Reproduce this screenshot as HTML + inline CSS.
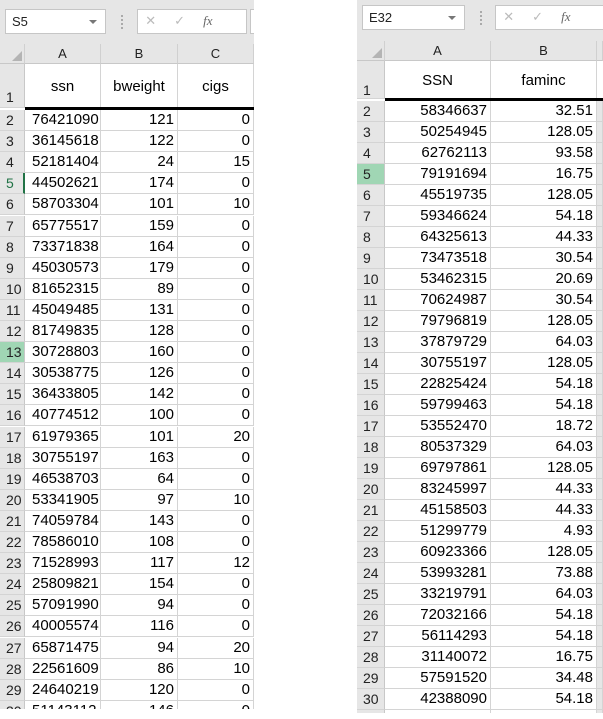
<!DOCTYPE html>
<html><head><meta charset="utf-8"><style>
*{margin:0;padding:0;box-sizing:border-box}
body{width:603px;height:719px;background:#fff;position:relative;overflow:hidden;font-family:"Liberation Sans",Calibri,sans-serif;font-size:15px;color:#000}
.p{position:absolute;overflow:hidden;background:#fff}
.tb{position:absolute;left:0;top:0;right:0;background:#e6e6e6}
.nb{position:absolute;background:#fff;border:1px solid #c6c6c6;font-size:13px;padding:4px 0 0 6px;color:#222}
.nb:after{content:"";position:absolute;right:8px;top:10px;border:4px solid transparent;border-top:4px solid #777}
.fx{position:absolute;background:#fff;border:1px solid #c6c6c6}
.ch{position:absolute;background:#e6e6e6;border-right:1px solid #d0d0d0;border-bottom:1px solid #c8c8c8;text-align:center;font-size:13px;color:#222}
.rh{position:absolute;left:0;background:#e6e6e6;border-right:1px solid #c8c8c8;border-bottom:1px solid #d4d4d4;font-size:14px;color:#222;padding-left:6px}
.c{position:absolute;border-right:1px solid #d4d4d4;border-bottom:1px solid #d4d4d4;white-space:nowrap}
.r{text-align:right;padding-right:3px}
.l{padding-left:7px}
.ct{text-align:center}
.sel{background:#a0d6b4 !important}
</style></head><body>

<div class="p" style="left:0;top:0;width:254px;height:709px">
<div class="tb" style="height:64px"></div>
<div class="nb" style="left:5px;top:9px;width:101px;height:25px">S5</div>
<div style="position:absolute;left:121px;top:15px;width:2px;height:14px;border-left:2px dotted #aaa"></div>
<div class="fx" style="left:137px;top:9px;width:110px;height:25px;font-size:13px;color:#bbb;padding-top:3px">&nbsp;&nbsp;✕&nbsp;&nbsp;&nbsp;&nbsp;&nbsp;✓&nbsp;&nbsp;&nbsp;&nbsp;&nbsp;<i style="color:#666;font-family:'Liberation Serif',serif">fx</i></div>
<div style="position:absolute;left:250px;top:9px;width:6px;height:25px;background:#fff;border:1px solid #c6c6c6"></div>
<div class="ch" style="left:0;top:44px;width:25px;height:20px"><svg width="25" height="20" style="position:absolute;left:0;top:0"><path d="M22 17 L22 7 L12 17Z" fill="#b4b4b4"/></svg></div>
<div class="ch" style="left:25px;top:44px;width:76px;height:20px;line-height:19px">A</div>
<div class="ch" style="left:101px;top:44px;width:77px;height:20px;line-height:19px">B</div>
<div class="ch" style="left:178px;top:44px;width:76px;height:20px;line-height:19px">C</div>
<div class="rh" style="top:64px;width:25px;height:44px;padding-top:25px">1</div>
<div class="c ct" style="left:25px;top:64px;width:76px;height:44px;padding-top:14px">ssn</div>
<div class="c ct" style="left:101px;top:64px;width:77px;height:44px;padding-top:14px">bweight</div>
<div class="c ct" style="left:178px;top:64px;width:76px;height:44px;padding-top:14px">cigs</div>
<div style="position:absolute;left:25px;top:107px;width:229px;height:3px;background:#000"></div>
<div id="L"></div>
</div>

<div class="p" style="left:357px;top:0;width:246px;height:713px">
<div class="tb" style="height:61px"></div>
<div class="nb" style="left:5px;top:5px;width:103px;height:25px">E32</div>
<div style="position:absolute;left:123px;top:11px;width:2px;height:14px;border-left:2px dotted #aaa"></div>
<div class="fx" style="left:138px;top:5px;width:110px;height:25px;font-size:13px;color:#bbb;padding-top:3px">&nbsp;&nbsp;✕&nbsp;&nbsp;&nbsp;&nbsp;&nbsp;✓&nbsp;&nbsp;&nbsp;&nbsp;&nbsp;<i style="color:#666;font-family:'Liberation Serif',serif">fx</i></div>
<div class="ch" style="left:0;top:41px;width:28px;height:20px"><svg width="28" height="20" style="position:absolute;left:0;top:0"><path d="M25 17 L25 7 L15 17Z" fill="#b4b4b4"/></svg></div>
<div class="ch" style="left:28px;top:41px;width:106px;height:20px;line-height:19px">A</div>
<div class="ch" style="left:134px;top:41px;width:106px;height:20px;line-height:19px">B</div>
<div class="ch" style="left:240px;top:41px;width:6px;height:20px"></div>
<div class="rh" style="top:61px;width:28px;height:38px;padding-top:21px">1</div>
<div class="c ct" style="left:28px;top:61px;width:106px;height:38px;padding-top:11px">SSN</div>
<div class="c ct" style="left:134px;top:61px;width:106px;height:38px;padding-top:11px">faminc</div>
<div style="position:absolute;left:28px;top:98px;width:218px;height:3px;background:#000"></div>
<div id="R"></div>
</div>

<script>
var L=[[76421090,121,0],[36145618,122,0],[52181404,24,15],[44502621,174,0],[58703304,101,10],[65775517,159,0],[73371838,164,0],[45030573,179,0],[81652315,89,0],[45049485,131,0],[81749835,128,0],[30728803,160,0],[30538775,126,0],[36433805,142,0],[40774512,100,0],[61979365,101,20],[30755197,163,0],[46538703,64,0],[53341905,97,10],[74059784,143,0],[78586010,108,0],[71528993,117,12],[25809821,154,0],[57091990,94,0],[40005574,116,0],[65871475,94,20],[22561609,86,10],[24640219,120,0],[51143112,146,0]];
var h='';
for(var i=0;i<L.length;i++){var n=i+2,t=110+i*21.1;
var cls='rh'+(n==13?' sel':''),st=n==5?'color:#217346;border-right:2px solid #217346;':'';
h+='<div class="'+cls+'" style="top:'+t+'px;width:25px;height:21.1px;line-height:20px;'+st+'">'+n+'</div>';
h+='<div class="c l" style="left:25px;top:'+t+'px;width:76px;height:21.1px;line-height:20px">'+L[i][0]+'</div>';
h+='<div class="c r" style="left:101px;top:'+t+'px;width:77px;height:21.1px;line-height:20px">'+L[i][1]+'</div>';
h+='<div class="c r" style="left:178px;top:'+t+'px;width:76px;height:21.1px;line-height:20px">'+L[i][2]+'</div>';}
document.getElementById('L').outerHTML=h;
var R=[[58346637,'32.51'],[50254945,'128.05'],[62762113,'93.58'],[79191694,'16.75'],[45519735,'128.05'],[59346624,'54.18'],[64325613,'44.33'],[73473518,'30.54'],[53462315,'20.69'],[70624987,'30.54'],[79796819,'128.05'],[37879729,'64.03'],[30755197,'128.05'],[22825424,'54.18'],[59799463,'54.18'],[53552470,'18.72'],[80537329,'64.03'],[69797861,'128.05'],[83245997,'44.33'],[45158503,'44.33'],[51299779,'4.93'],[60923366,'128.05'],[53993281,'73.88'],[33219791,'64.03'],[72032166,'54.18'],[56114293,'54.18'],[31140072,'16.75'],[57591520,'34.48'],[42388090,'54.18'],['','']];
h='';
for(var i=0;i<R.length;i++){var n=i+2,t=101+i*21;
h+='<div class="rh'+(n==5?' sel':'')+'" style="top:'+t+'px;width:28px;height:21px;line-height:20px">'+(n<31?n:'')+'</div>';
h+='<div class="c r" style="left:28px;top:'+t+'px;width:106px;height:21px;line-height:20px">'+R[i][0]+'</div>';
h+='<div class="c r" style="left:134px;top:'+t+'px;width:106px;height:21px;line-height:20px">'+R[i][1]+'</div>';
h+='<div class="c" style="left:240px;top:'+t+'px;width:6px;height:21px;background:#e6e6e6"></div>';}
document.getElementById('R').outerHTML=h;
</script>
</body></html>
